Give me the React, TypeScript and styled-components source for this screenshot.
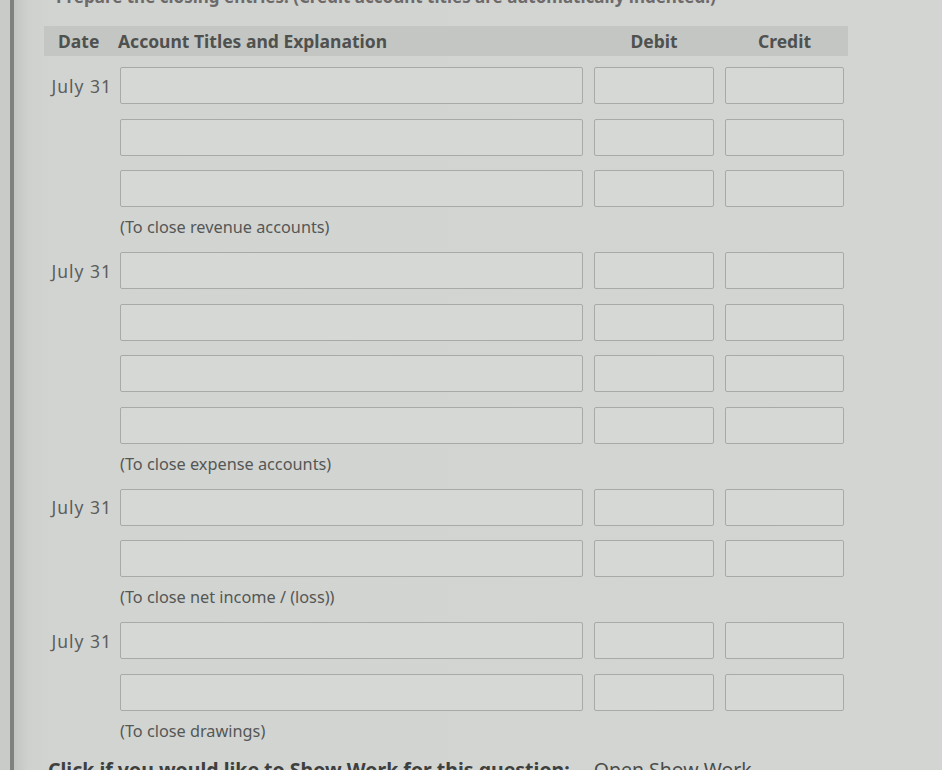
import React from 'react';
import styled, { createGlobalStyle } from 'styled-components';

const GlobalStyle = createGlobalStyle`
    html, body {
        margin: 0;
        padding: 0;
        background: #c9cbc9;
        overflow: hidden;
    }
    body {
        font-family: "Noto Sans", "DejaVu Sans", sans-serif;
    }
`;

type Entry = {
    rows: number;
    note: string;
};

const entries: Entry[] = [
    { rows: 3, note: '(To close revenue accounts)' },
    { rows: 4, note: '(To close expense accounts)' },
    { rows: 2, note: '(To close net income / (loss))' },
    { rows: 2, note: '(To close drawings)' },
];

/**
 * The page: a left frame line, then the question body.
 */
const App = () => (
    <>
        <GlobalStyle/>
        <Page>
            <Frame>
                <Instructions>
                    Prepare the closing entries. (Credit account titles are automatically indented.)
                </Instructions>
                <Table>
                    <HeaderBar>
                        <HeadCell $align="left" $pad={14}>Date</HeadCell>
                        <HeadCell $align="left" $pad={-2}>Account Titles and Explanation</HeadCell>
                        <HeadCell $align="center">Debit</HeadCell>
                        <HeadCell $align="center">Credit</HeadCell>
                    </HeaderBar>
                    {entries.map((entry, i) => (
                        <Group key={i}>
                            {Array.from({ length: entry.rows }).map((_, r) => (
                                <EntryRow key={r}>
                                    <DateLabel>{r === 0 ? 'July 31' : ''}</DateLabel>
                                    <Field/>
                                    <Field/>
                                    <Field/>
                                </EntryRow>
                            ))}
                            <Note>{entry.note}</Note>
                        </Group>
                    ))}
                </Table>
                <ShowWork>
                    Click if you would like to Show Work for this question:
                    <ShowLink>Open Show Work</ShowLink>
                </ShowWork>
            </Frame>
        </Page>
    </>
);

export default App;

const Page = styled.div`
    width: 942px;
    height: 770px;
    padding-left: 10px;
    box-sizing: border-box;
    overflow: hidden;
`;

const Frame = styled.div`
    display: flow-root;
    height: 100%;
    border-left: 4px solid #7f817f;
    background: linear-gradient(to right, #c2c4c2 0px, #cfd1cf 14px, #d2d4d2 40px, #d3d5d2 100%);
    padding-left: 30px;
    box-sizing: border-box;
`;

const Instructions = styled.div`
    margin-top: -15px;
    height: 22px;
    padding-left: 12px;
    font-size: 17px;
    font-weight: bold;
    color: #6e6a6a;
    white-space: nowrap;
    overflow: hidden;
`;

const Table = styled.div`
    margin-top: 19px;
    width: 804px;
`;

const columns = `
    display: grid;
    grid-template-columns: 65px 463px 120px 119px;
    column-gap: 11px;
`;

const HeaderBar = styled.div`
    ${columns}
    height: 30px;
    align-items: center;
    background: #c4c6c4;
    padding-right: 4px;
    margin-bottom: 11px;
`;

const HeadCell = styled.div<{ $align: 'left' | 'center'; $pad?: number }>`
    text-align: ${p => p.$align};
    padding-left: ${p => (p.$pad && p.$pad > 0 ? p.$pad : 0)}px;
    margin-left: ${p => (p.$pad && p.$pad < 0 ? p.$pad : 0)}px;
    font-size: 17.5px;
    font-weight: bold;
    color: #4f514f;
    white-space: nowrap;
`;

const Group = styled.div`
    display: flex;
    flex-direction: column;
    gap: 14.5px;
    margin-bottom: 15px;
`;

const EntryRow = styled.div`
    ${columns}
    height: 37px;
    align-items: center;
`;

const DateLabel = styled.div`
    text-align: right;
    margin-right: -3px;
    font-size: 17.5px;
    letter-spacing: 1px;
    color: #5c5e5c;
    white-space: nowrap;
`;

const Field = styled.div`
    height: 37px;
    box-sizing: border-box;
    border: 1px solid #a8aaa8;
    border-radius: 2px;
    background: #d6d8d6;
`;

const Note = styled.div`
    margin-top: -4.5px;
    margin-left: 76px;
    height: 20px;
    line-height: 20px;
    font-size: 16.3px;
    color: #555755;
    white-space: nowrap;
`;

const ShowWork = styled.div`
    margin-top: 7px;
    padding-left: 4px;
    font-size: 19.5px;
    font-weight: bold;
    color: #3e403e;
    white-space: nowrap;
`;

const ShowLink = styled.span`
    margin-left: 24px;
    font-weight: normal;
    color: #4a4c4a;
`;
